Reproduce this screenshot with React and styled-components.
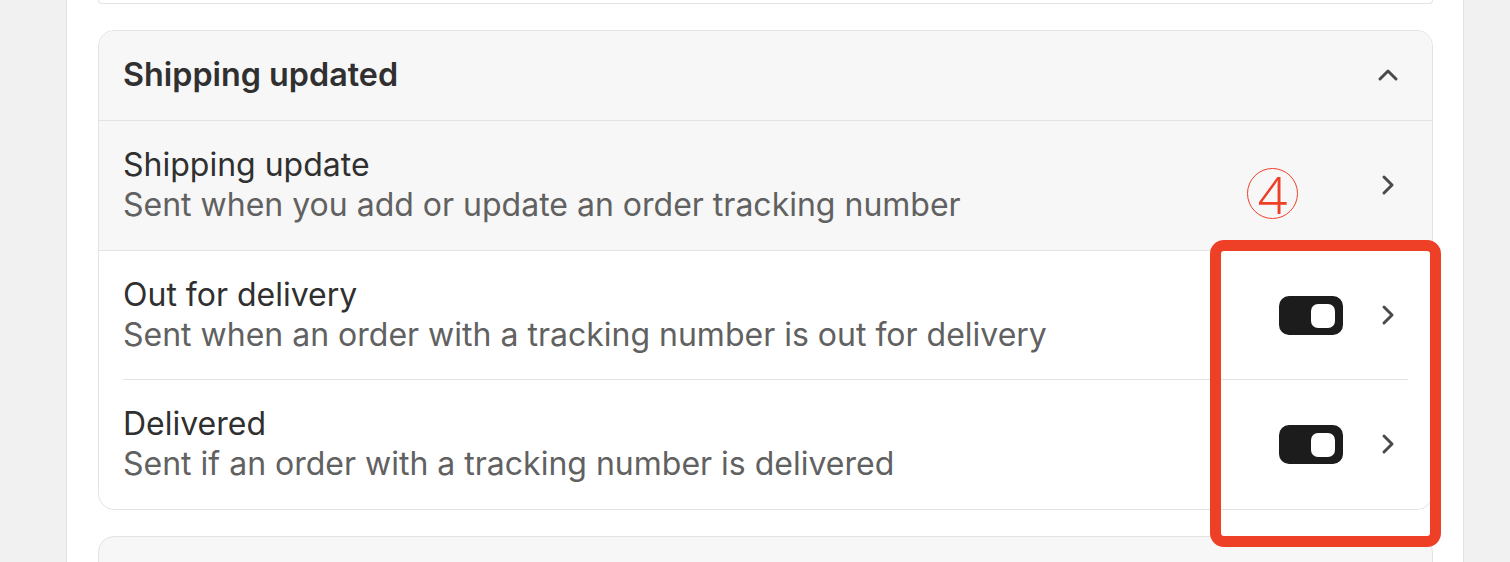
import styled, { createGlobalStyle } from "styled-components";

const GlobalStyle = createGlobalStyle`
  html, body {
    margin: 0;
    padding: 0;
    background: #f1f1f1;
    font-family: Inter, "Noto Sans", sans-serif;
    color: #303030;
  }
  * { box-sizing: border-box; }
`;

const Page = styled.div`
  display: flex;
  height: 562px;
  overflow: hidden;
`;
const Panel = styled.main`
  margin-left: 66px;
  width: 1398px;
  background: #fff;
  border-left: 1px solid #e3e3e3;
  border-right: 1px solid #e3e3e3;
  padding: 0 30px 0 31px;
  display: flex;
  flex-direction: column;
  gap: 26px;
  & > * {
    flex-shrink: 0;
  }
`;
const PrevCard = styled.div`
  height: 4px;
  border: 1px solid #e3e3e3;
  border-top: none;
  border-radius: 0 0 16px 16px;
`;
const Card = styled.section`
  position: relative;
  border: 1px solid #e3e3e3;
  border-radius: 16px;
  background: ${({ $muted }) => ($muted ? "#f7f7f7" : "#fff")};
  min-height: ${({ $muted }) => ($muted ? "60px" : "auto")};
`;
const Header = styled.div`
  display: flex;
  align-items: center;
  justify-content: space-between;
  padding: 24px 24px 25px;
  background: #f7f7f7;
  border-radius: 16px 16px 0 0;
  border-bottom: 1px solid #e3e3e3;
`;
const HeaderTitle = styled.h2`
  margin: 0;
  font-size: 32.3px;
  line-height: 40px;
  font-weight: 600;
  color: #303030;
`;
const Row = styled.div`
  position: relative;
  display: flex;
  align-items: center;
  padding: 24px 24px 25px;
  background: ${({ $muted }) => ($muted ? "#f7f7f7" : "#fff")};
  border-bottom: ${({ $full }) => ($full ? "1px solid #e3e3e3" : "none")};
  border-radius: ${({ $last }) => ($last ? "0 0 16px 16px" : "0")};
  ${({ $inset }) =>
    $inset &&
    `
    &::after {
      content: "";
      position: absolute;
      left: 24px;
      right: 24px;
      bottom: 0;
      height: 1px;
      background: #e3e3e3;
    }
  `}
`;
const RowText = styled.div`
  flex: 1;
  display: flex;
  flex-direction: column;
`;
const RowTitle = styled.span`
  font-size: 32px;
  line-height: 40px;
  color: #303030;
`;
const RowDesc = styled.span`
  font-size: 32px;
  line-height: 40px;
  color: #616161;
`;
const Actions = styled.div`
  display: flex;
  align-items: center;
  gap: 25px;
`;
const Toggle = styled.span`
  position: relative;
  display: block;
  width: 64px;
  height: 39px;
  border-radius: 10px;
  background: #1c1c1c;
  &::after {
    content: "";
    position: absolute;
    top: 8px;
    right: 8px;
    width: 24px;
    height: 24px;
    border-radius: 7px;
    background: #fff;
  }
`;
const IconBox = styled.svg`
  display: block;
  width: 40px;
  height: 40px;
`;
const Step = styled.span`
  position: absolute;
  left: 1148px;
  top: 137px;
  width: 51px;
  height: 51px;
  border: 1.6px solid #ee4027;
  border-radius: 50%;
  display: flex;
  align-items: center;
  justify-content: center;
  font-family: "Noto Sans", sans-serif;
  font-size: 52px;
  line-height: 1;
  font-weight: 300;
  color: #ee4027;
  z-index: 2;
`;
const Highlight = styled.div`
  position: absolute;
  left: 1111px;
  top: 209px;
  width: 231px;
  height: 307px;
  border: 11px solid #ee4027;
  border-radius: 14px;
  pointer-events: none;
  z-index: 2;
`;

function ChevronRight() {
  return (
    <IconBox viewBox="0 0 40 40" fill="none">
      <polyline points="16,12 24,20 16,28" stroke="#4a4a4a" strokeWidth="3" strokeLinecap="round" strokeLinejoin="round" />
    </IconBox>
  );
}
function ChevronUp() {
  return (
    <IconBox viewBox="0 0 40 40" fill="none">
      <polyline points="12,24 20,16 28,24" stroke="#4a4a4a" strokeWidth="3" strokeLinecap="round" strokeLinejoin="round" />
    </IconBox>
  );
}

const notifications = [
  { title: "Shipping update", desc: "Sent when you add or update an order tracking number", toggle: false },
  { title: "Out for delivery", desc: "Sent when an order with a tracking number is out for delivery", toggle: true },
  { title: "Delivered", desc: "Sent if an order with a tracking number is delivered", toggle: true },
];

export default function App() {
  return (
    <>
      <GlobalStyle />
      <Page>
        <Panel>
          <PrevCard />
          <Card>
            <Header>
              <HeaderTitle>Shipping updated</HeaderTitle>
              <ChevronUp />
            </Header>
            {notifications.map((n, i) => (
              <Row
                key={n.title}
                $muted={i === 0}
                $full={i === 0}
                $inset={i === 1}
                $last={i === notifications.length - 1}
              >
                <RowText>
                  <RowTitle>{n.title}</RowTitle>
                  <RowDesc>{n.desc}</RowDesc>
                </RowText>
                <Actions>
                  {n.toggle && <Toggle />}
                  <ChevronRight />
                </Actions>
              </Row>
            ))}
            <Step>4</Step>
            <Highlight />
          </Card>
          <Card $muted />
        </Panel>
      </Page>
    </>
  );
}
